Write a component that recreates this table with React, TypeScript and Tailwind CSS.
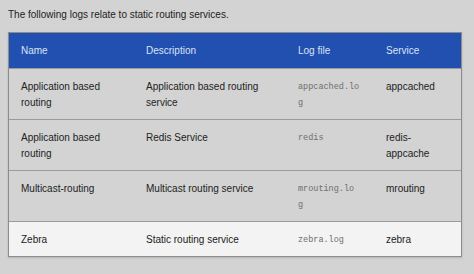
const rows = [
  {
    name: "Application based routing",
    description: "Application based routing service",
    log: ["appcached.lo", "g"],
    service: "appcached",
  },
  {
    name: "Application based routing",
    description: "Redis Service",
    log: ["redis"],
    service: "redis-appcache",
  },
  {
    name: "Multicast-routing",
    description: "Multicast routing service",
    log: ["mrouting.lo", "g"],
    service: "mrouting",
  },
  {
    name: "Zebra",
    description: "Static routing service",
    log: ["zebra.log"],
    service: "zebra",
    active: true,
  },
];

const cols = "grid grid-cols-[125px_152px_88px_89px]";

export default function App() {
  return (
    <div className="w-[474px] h-[274px] bg-[#d3d3d3] px-2 pt-[7px] font-['Liberation_Sans',Arial,sans-serif] text-[10px] leading-4 text-[#222]">
      <p className="mb-[9px]">The following logs relate to static routing services.</p>

      <div className="w-[454px] border border-[#8c8c8c] shadow-[0_1px_2px_rgba(0,0,0,0.15)]">
        {/* header */}
        <div className={`${cols} bg-[#2150b1] text-[#dbe3f4] h-[35px] items-center`}>
          <div className="px-3">Name</div>
          <div className="px-3">Description</div>
          <div className="px-3">Log file</div>
          <div className="px-3">Service</div>
        </div>

        {rows.map((r, idx) => (
          <div
            key={idx}
            className={`${cols} pt-[10px] pb-[8px] ${idx < rows.length - 1 ? "border-b border-[#9b9b9b]" : ""} ${
              r.active ? "bg-[#f3f3f3]" : "bg-[#d3d3d3]"
            } ${idx === 0 ? "border-t border-[#7a7a7a]" : ""}`}
          >
            <div className="px-3">{r.name}</div>
            <div className="px-3">{r.description}</div>
            <div className="px-3 font-['Liberation_Mono',monospace] text-[8.5px] text-[#6e6e6e]">
              {r.log.map((line) => (
                <div key={line}>{line}</div>
              ))}
            </div>
            <div className="px-3">{r.service}</div>
          </div>
        ))}
      </div>
    </div>
  );
}
